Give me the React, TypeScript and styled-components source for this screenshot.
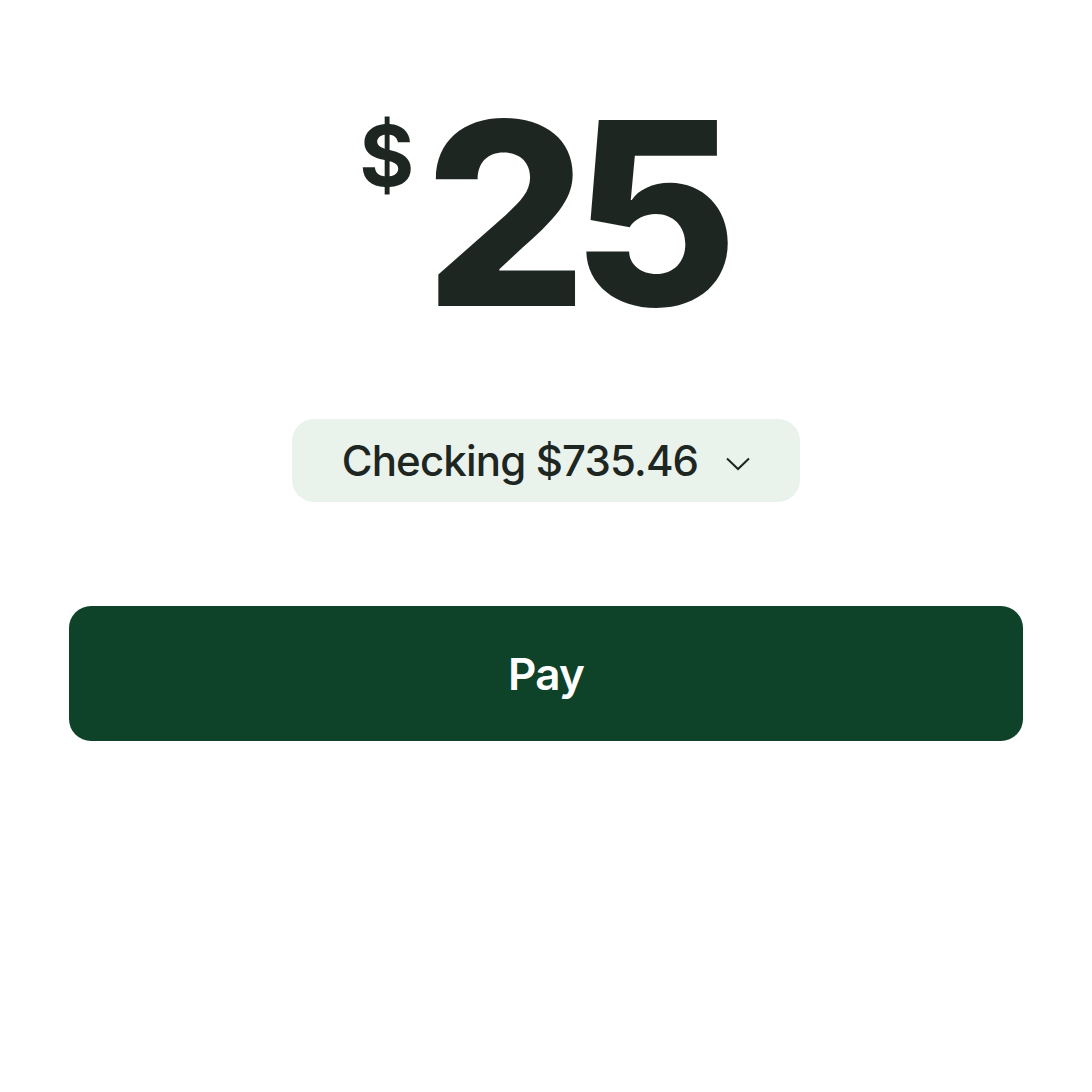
import React from 'react'
import styled, { createGlobalStyle } from 'styled-components'

const Global = createGlobalStyle`
  html, body { margin: 0; padding: 0; background: #ffffff; }
  body { font-family: Inter, "Noto Sans", sans-serif; color: #1e2622; }
`

const Page = styled.div`
  width: 1092px;
  height: 1092px;
  display: flex;
  flex-direction: column;
  align-items: center;
  padding-top: 86px;
  box-sizing: border-box;
`

const Amount = styled.div`
  display: flex;
  align-items: flex-start;
  gap: 10px;
  margin-right: 10px;
`

const Currency = styled.span`
  font-size: 84px;
  font-weight: 700;
  line-height: 1;
  margin-top: 28px;
`

const Value = styled.span`
  font-size: 255px;
  font-weight: 800;
  line-height: 1;
  letter-spacing: -0.06em;
`

const AccountPicker = styled.button`
  margin-top: 78px;
  width: 508px;
  height: 83px;
  border: none;
  border-radius: 22px;
  background: #eaf2ec;
  display: flex;
  align-items: center;
  justify-content: center;
  gap: 28px;
  padding: 0;
  font-family: Inter, "Noto Sans", sans-serif;
  color: #1e2622;
  cursor: pointer;
`

const AccountLabel = styled.span`
  font-size: 42px;
  font-weight: 500;
  letter-spacing: -0.02em;
`

const ChevronIcon = styled.svg`
  margin-top: 6px;
`

const PayButton = styled.button`
  margin-top: 104px;
  width: 954px;
  height: 135px;
  border: none;
  border-radius: 22px;
  background: #0e4229;
  color: #ffffff;
  font-family: Inter, "Noto Sans", sans-serif;
  font-size: 44px;
  font-weight: 600;
  letter-spacing: -0.02em;
  cursor: pointer;
`

function Chevron() {
  return (
    <ChevronIcon width="24" height="14" viewBox="0 0 24 14" fill="none">
      <path d="M1 1.5 L12 12 L23 1.5" stroke="#1e2622" strokeWidth="2" />
    </ChevronIcon>
  )
}

export default function App() {
  return (
    <Page>
      <Global />
      <Amount>
        <Currency>$</Currency>
        <Value>25</Value>
      </Amount>
      <AccountPicker>
        <AccountLabel>Checking $735.46</AccountLabel>
        <Chevron />
      </AccountPicker>
      <PayButton>Pay</PayButton>
    </Page>
  )
}
